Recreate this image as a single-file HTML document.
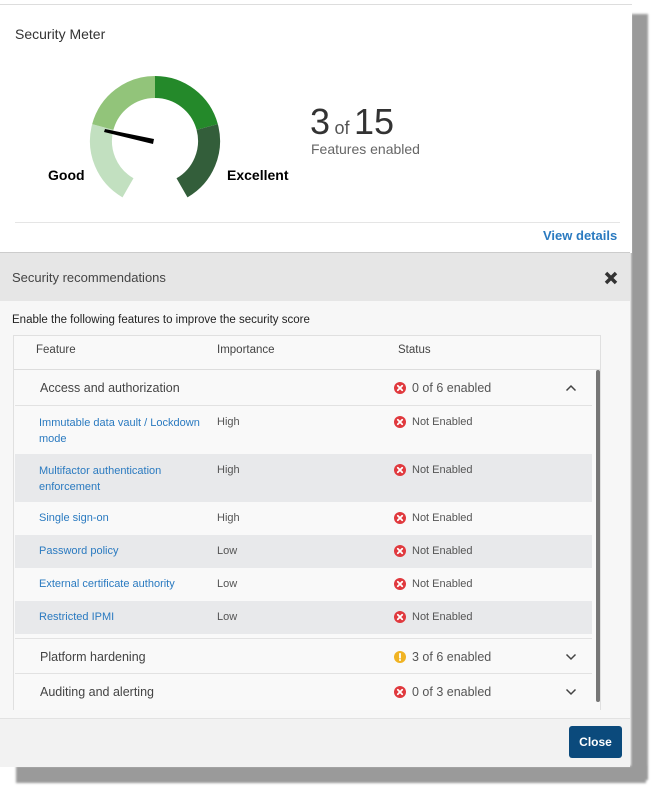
<!DOCTYPE html>
<html><head><meta charset="utf-8"><style>
*{margin:0;padding:0;box-sizing:border-box}
body{width:660px;height:794px;background:#fff;font-family:"Liberation Sans",sans-serif;position:relative;overflow:hidden;color:#333}
.abs{position:absolute}
.shadowR{left:631px;top:14px;width:17px;height:766px;background:#9a9a9a;filter:blur(1px)}
.shadowB{left:16px;top:766px;width:630px;height:17px;background:#9a9a9a;filter:blur(1px)}
.card{left:0;top:4px;width:632px;height:249px;background:#fff;border-top:1px solid #ddd}
.modal{left:0;top:252px;width:630px;height:515px;background:#f7f7f7}
.mh{left:0;top:0;width:630px;height:49px;background:#e6e6e6;border-top:1px solid #ccc}
.row{position:absolute;left:15px;width:577px;font-size:11px}
.lnk{color:#2a7ac0}
.ic{display:inline-block;vertical-align:-2px;margin-right:6px}
.st{display:flex;align-items:center}
</style></head><body>
<svg width="0" height="0" style="position:absolute">
  <defs>
    <g id="xi"><circle cx="6" cy="6" r="6" fill="#e0393e"/><path d="M3.8 3.8 L8.2 8.2 M8.2 3.8 L3.8 8.2" stroke="#fff" stroke-width="1.8" stroke-linecap="round"/></g>
    <g id="wi"><circle cx="6" cy="6" r="6" fill="#f0b323"/><path d="M6 2.8 V6.8" stroke="#fff" stroke-width="1.8" stroke-linecap="round"/><circle cx="6" cy="9" r="1" fill="#fff"/></g>
  </defs>
</svg>
<div class="abs shadowR"></div>
<div class="abs shadowB"></div>
<div class="abs card">
  <div class="abs" style="left:15px;top:21px;font-size:14px;color:#333">Security Meter</div>
  <svg class="abs" style="left:0;top:-4px" width="300" height="220">
    <path d="M128 186.8 A54 54 0 0 1 102.8 126" stroke="#c2e0c0" stroke-width="22" fill="none"/>
    <path d="M102.8 126 A54 54 0 0 1 155 86" stroke="#92c47a" stroke-width="22" fill="none"/>
    <path d="M155 86 A54 54 0 0 1 207.2 126" stroke="#24892a" stroke-width="22" fill="none"/>
    <path d="M207.2 126 A54 54 0 0 1 182 186.8" stroke="#335e3a" stroke-width="22" fill="none"/>
    <polygon points="104,131 105,128 154,138 153,143" fill="#000"/>
  </svg>
  <div class="abs" style="left:48px;top:162px;font-size:14px;font-weight:bold;color:#000">Good</div>
  <div class="abs" style="left:227px;top:162px;font-size:14px;font-weight:bold;color:#000">Excellent</div>
  <div class="abs" style="left:310px;top:96px;color:#333;white-space:nowrap"><span style="font-size:36px">3</span> <span style="font-size:18px;color:#555">of</span> <span style="font-size:36px">15</span></div>
  <div class="abs" style="left:311px;top:136px;font-size:14px;color:#666">Features enabled</div>
  <div class="abs" style="left:15px;top:217px;width:605px;height:1px;background:#e5e5e5"></div>
  <div class="abs" style="left:543px;top:223px;font-size:13px;font-weight:bold;color:#2a7ac0">View details</div>
</div>
<div class="abs modal">
  <div class="abs mh"><div class="abs" style="left:12px;top:17px;font-size:13px;color:#444">Security recommendations</div>
  <svg class="abs" style="left:604px;top:18px" width="14" height="14"><path d="M2 2 L12 12 M12 2 L2 12" stroke="#333" stroke-width="3.5"/></svg></div>
  <div class="abs" style="left:12px;top:62px;font-size:11.5px;color:#222">Enable the following features to improve the security score</div>
  <div class="abs" style="left:13px;top:83px;width:588px;height:375px;border:1px solid #e0e0e0;border-bottom:none;background:#f9f9f9"></div>
  <div class="abs" style="left:14px;top:117px;width:586px;height:1px;background:#ddd"></div>
  <div class="abs" style="left:36px;top:92px;font-size:11.5px;color:#444">Feature</div>
  <div class="abs" style="left:217px;top:92px;font-size:11.5px;color:#444">Importance</div>
  <div class="abs" style="left:398px;top:92px;font-size:11.5px;color:#444">Status</div>
  <div class="abs" style="left:596px;top:118px;width:4px;height:332px;background:#777;border-radius:2px"></div>
  <div class="row" style="top:118px;height:36px;border-bottom:1px solid #e2e2e2">
    <span class="abs" style="left:25px;top:11px;font-size:12.5px;color:#444">Access and authorization</span>
    <span class="abs st" style="left:379px;top:11px;font-size:12.5px;color:#555"><svg class="ic" width="12" height="12"><use href="#xi"/></svg>0 of 6 enabled</span>
    <svg class="abs" style="left:550px;top:14px" width="12" height="8"><path d="M1.5 6.5 L6 2 L10.5 6.5" stroke="#444" stroke-width="1.5" fill="none"/></svg>
  </div>
  <div class="row" style="top:154px;height:48px;background:#f9f9f9"><span class="abs lnk" style="left:24px;top:9px;width:170px;line-height:16px">Immutable data vault / Lockdown mode</span><span class="abs" style="left:202px;top:10px;color:#555">High</span><span class="abs st" style="left:379px;top:10px;color:#555"><svg class="ic" width="12" height="12"><use href="#xi"/></svg>Not Enabled</span></div>
  <div class="row" style="top:202px;height:48px;background:#e8e9eb"><span class="abs lnk" style="left:24px;top:9px;width:170px;line-height:16px">Multifactor authentication enforcement</span><span class="abs" style="left:202px;top:10px;color:#555">High</span><span class="abs st" style="left:379px;top:10px;color:#555"><svg class="ic" width="12" height="12"><use href="#xi"/></svg>Not Enabled</span></div>
  <div class="row" style="top:250px;height:33px;background:#f9f9f9"><span class="abs lnk" style="left:24px;top:10px">Single sign-on</span><span class="abs" style="left:202px;top:10px;color:#555">High</span><span class="abs st" style="left:379px;top:10px;color:#555"><svg class="ic" width="12" height="12"><use href="#xi"/></svg>Not Enabled</span></div>
  <div class="row" style="top:283px;height:33px;background:#e8e9eb"><span class="abs lnk" style="left:24px;top:10px">Password policy</span><span class="abs" style="left:202px;top:10px;color:#555">Low</span><span class="abs st" style="left:379px;top:10px;color:#555"><svg class="ic" width="12" height="12"><use href="#xi"/></svg>Not Enabled</span></div>
  <div class="row" style="top:316px;height:33px;background:#f9f9f9"><span class="abs lnk" style="left:24px;top:10px">External certificate authority</span><span class="abs" style="left:202px;top:10px;color:#555">Low</span><span class="abs st" style="left:379px;top:10px;color:#555"><svg class="ic" width="12" height="12"><use href="#xi"/></svg>Not Enabled</span></div>
  <div class="row" style="top:349px;height:33px;background:#e8e9eb"><span class="abs lnk" style="left:24px;top:10px">Restricted IPMI</span><span class="abs" style="left:202px;top:10px;color:#555">Low</span><span class="abs st" style="left:379px;top:10px;color:#555"><svg class="ic" width="12" height="12"><use href="#xi"/></svg>Not Enabled</span></div>
  <div class="row" style="top:386px;height:36px;border-top:1px solid #e2e2e2;border-bottom:1px solid #e2e2e2">
    <span class="abs" style="left:25px;top:11px;font-size:12.5px;color:#444">Platform hardening</span>
    <span class="abs st" style="left:379px;top:11px;font-size:12.5px;color:#555"><svg class="ic" width="12" height="12"><use href="#wi"/></svg>3 of 6 enabled</span>
    <svg class="abs" style="left:550px;top:14px" width="12" height="8"><path d="M1.5 1.5 L6 6 L10.5 1.5" stroke="#444" stroke-width="1.5" fill="none"/></svg>
  </div>
  <div class="row" style="top:422px;height:36px">
    <span class="abs" style="left:25px;top:11px;font-size:12.5px;color:#444">Auditing and alerting</span>
    <span class="abs st" style="left:379px;top:11px;font-size:12.5px;color:#555"><svg class="ic" width="12" height="12"><use href="#xi"/></svg>0 of 3 enabled</span>
    <svg class="abs" style="left:550px;top:14px" width="12" height="8"><path d="M1.5 1.5 L6 6 L10.5 1.5" stroke="#444" stroke-width="1.5" fill="none"/></svg>
  </div>
  <div class="abs" style="left:0;top:466px;width:630px;height:49px;background:#f2f2f2;border-top:1px solid #e2e2e2"></div>
  <div class="abs" style="left:569px;top:474px;width:53px;height:32px;background:#0b4a7c;border-radius:3px;color:#fff;font-size:12px;font-weight:bold;text-align:center;line-height:32px">Close</div>
</div>
</body></html>
